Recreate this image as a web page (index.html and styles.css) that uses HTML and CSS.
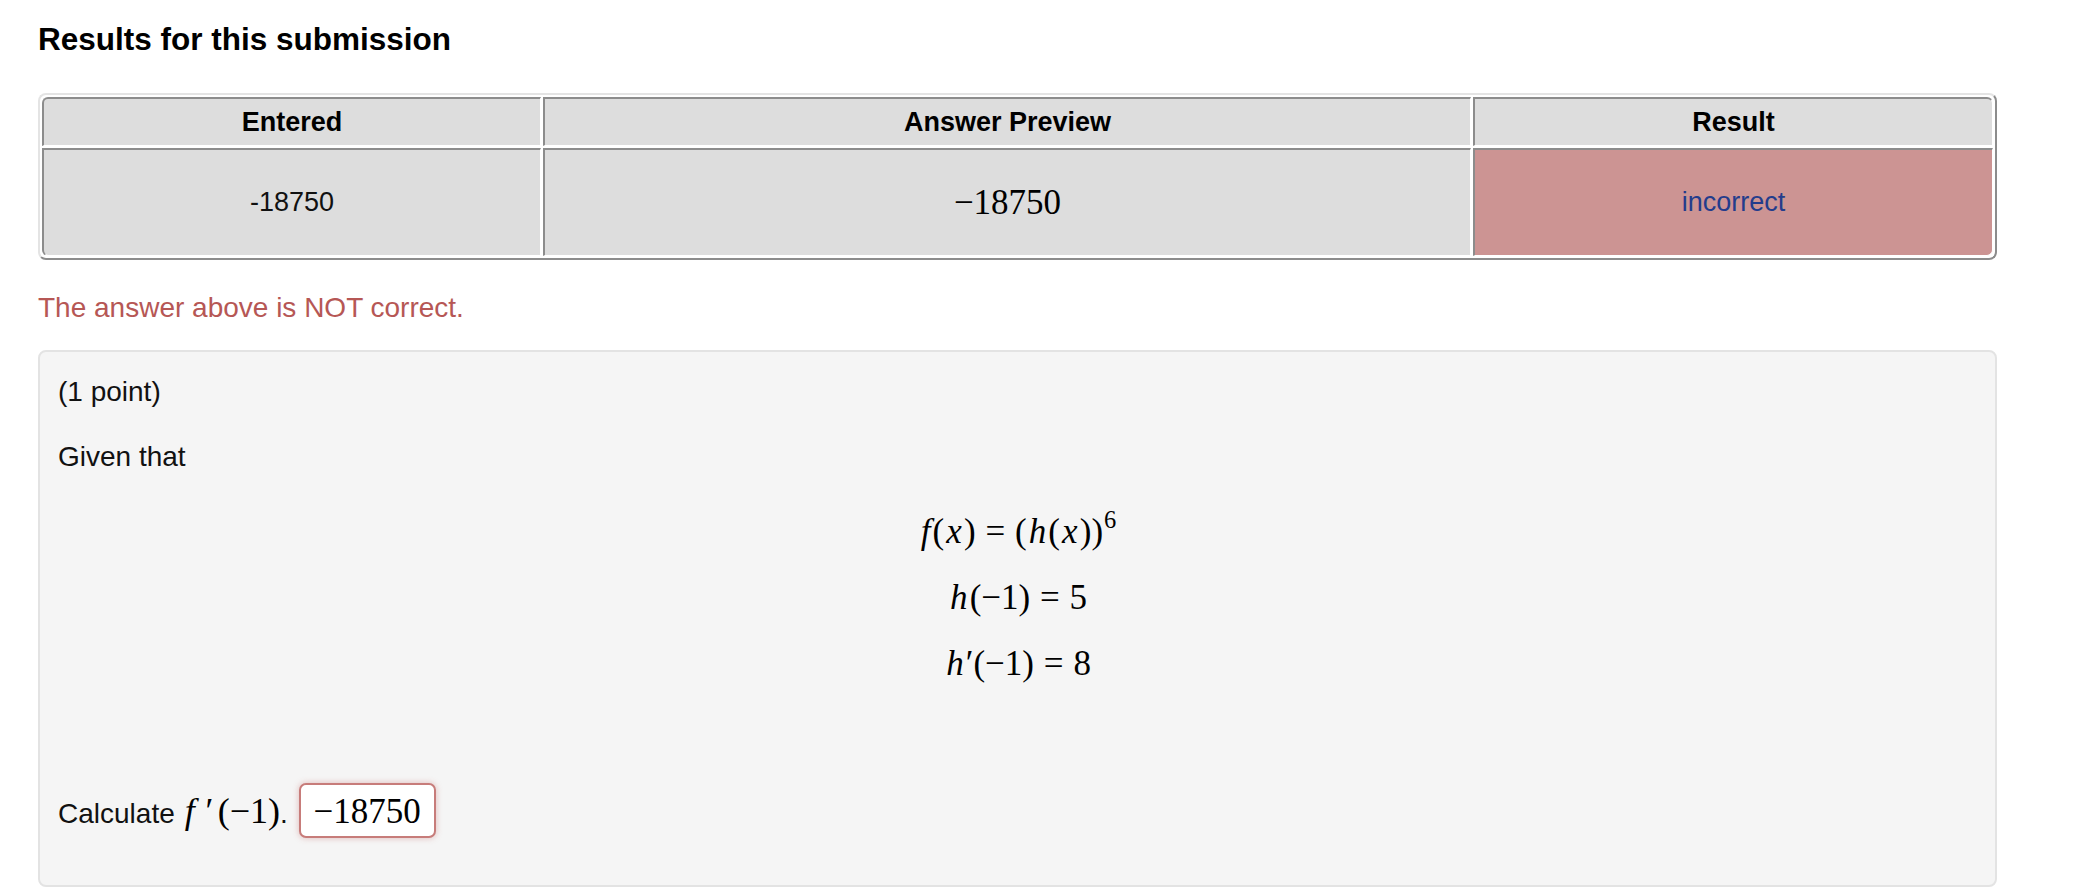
FILE: index.html
```html
<!DOCTYPE html>
<html lang="en">

<head>
    <meta charset="UTF-8">
    <title>Results for this submission</title>
    <link rel="stylesheet" href="styles.css">
</head>

<body>
    <div class="page">
        <h2 class="results-title">Results for this submission</h2>

        <!-- Tabela de resultados -->
        <table class="attempt-results">
            <tr>
                <th class="col-entered">Entered</th>
                <th class="col-preview">Answer Preview</th>
                <th class="col-result">Result</th>
            </tr>
            <tr>
                <td>-18750</td>
                <td class="preview"><span class="math">&minus;18750</span></td>
                <td class="result-bad">incorrect</td>
            </tr>
        </table>

        <p class="answer-message">The answer above is NOT correct.</p>

        <!-- Problema -->
        <div class="problem">
            <p class="points">(1 point)</p>
            <p class="given">Given that</p>

            <div class="display-math">
                <div class="eq"><i>f</i>(<i>x</i>)<span class="rel">=</span>(<i>h</i>(<i>x</i>))<sup>6</sup></div>
                <div class="eq"><i>h</i>(&minus;1)<span class="rel">=</span>5</div>
                <div class="eq"><i>h</i><span class="prime">&prime;</span>(&minus;1)<span class="rel">=</span>8</div>
            </div>

            <p class="calc">Calculate <span class="math"><i>f</i><span class="prime spaced">&prime;</span>(&minus;1)</span>. <span class="answer-box">&minus;18750</span></p>
        </div>
    </div>
</body>

</html>
```

FILE: styles.css
```css
body {
    margin: 0;
    background-color: #fff;
    color: #111;
    font-family: "Liberation Sans", Arial, Helvetica, sans-serif;
    font-size: 28px;
}

.page {
    width: 1959px;
    padding-left: 38px;
    padding-top: 19px;
}

.results-title {
    margin: 0;
    font-size: 31.5px;
    line-height: 40px;
    font-weight: bold;
    color: #000;
}

/* Tabela */
.attempt-results {
    margin-top: 34px;
    width: 1959px;
    table-layout: fixed;
    border-collapse: separate;
    border-spacing: 2px;
    border: 2px solid;
    border-color: #e4e4e4 #8c8c8c #8c8c8c #e4e4e4;
    border-radius: 8px;
}

.attempt-results th,
.attempt-results td {
    box-sizing: border-box;
    padding: 0;
    text-align: center;
    vertical-align: middle;
    background-color: #dddddd;
    border-style: solid;
    border-width: 2px 1px 1px 2px;
    border-color: #8c8c8c #fff #fff #8c8c8c;
    font-size: 27px;
}

.attempt-results th {
    height: 49px;
    font-weight: bold;
    color: #000;
}

.attempt-results td {
    height: 108px;
    color: #111;
}

.col-entered {
    width: 499px;
}

.col-preview {
    width: 928px;
}

.col-result {
    width: 520px;
}

.attempt-results th:first-child {
    border-top-left-radius: 6px;
}

.attempt-results th:last-child {
    border-top-right-radius: 6px;
}

.attempt-results td:first-child {
    border-bottom-left-radius: 6px;
}

.attempt-results td:last-child {
    border-bottom-right-radius: 6px;
}

.preview .math {
    font-size: 35px;
    color: #000;
}

.result-bad {
    background-color: #cc9493 !important;
    color: #233c8c !important;
}

.answer-message {
    margin: 28px 0 22px;
    line-height: 40px;
    color: #b65755;
}

/* Caixa do problema */
.problem {
    background-color: #f5f5f5;
    border: 2px solid #e3e3e3;
    border-radius: 8px;
    padding: 20px 18px 47px;
}

.problem p {
    margin: 0;
    line-height: 40px;
}

.given {
    margin-top: 25px !important;
}

.math,
.display-math {
    font-family: "Liberation Serif", "Times New Roman", serif;
}

.math i,
.display-math i {
    font-style: italic;
    padding: 0 0.06em;
}

.display-math {
    margin-top: 22px;
    font-size: 35px;
    text-align: center;
    color: #000;
}

.eq {
    line-height: 66px;
}

.rel {
    margin: 0 0.28em;
}

.eq sup {
    font-size: 0.7em;
    line-height: 0;
    vertical-align: 0.62em;
    margin-left: 1px;
}

.prime {
    font-style: normal;
}

.prime.spaced {
    margin-left: 0.24em;
    margin-right: 0.12em;
}

.calc {
    margin-top: 86px !important;
}

.calc .math {
    font-size: 36px;
    color: #000;
}

.answer-box {
    display: inline-block;
    margin-left: 3px;
    font-family: "Liberation Serif", "Times New Roman", serif;
    font-size: 35px;
    line-height: 40px;
    padding: 7px 13px 4px;
    background-color: #fff;
    border: 2px solid #c77c7a;
    border-radius: 7px;
    box-shadow: 0 0 6px rgba(185, 74, 72, 0.35);
    color: #000;
}
```
